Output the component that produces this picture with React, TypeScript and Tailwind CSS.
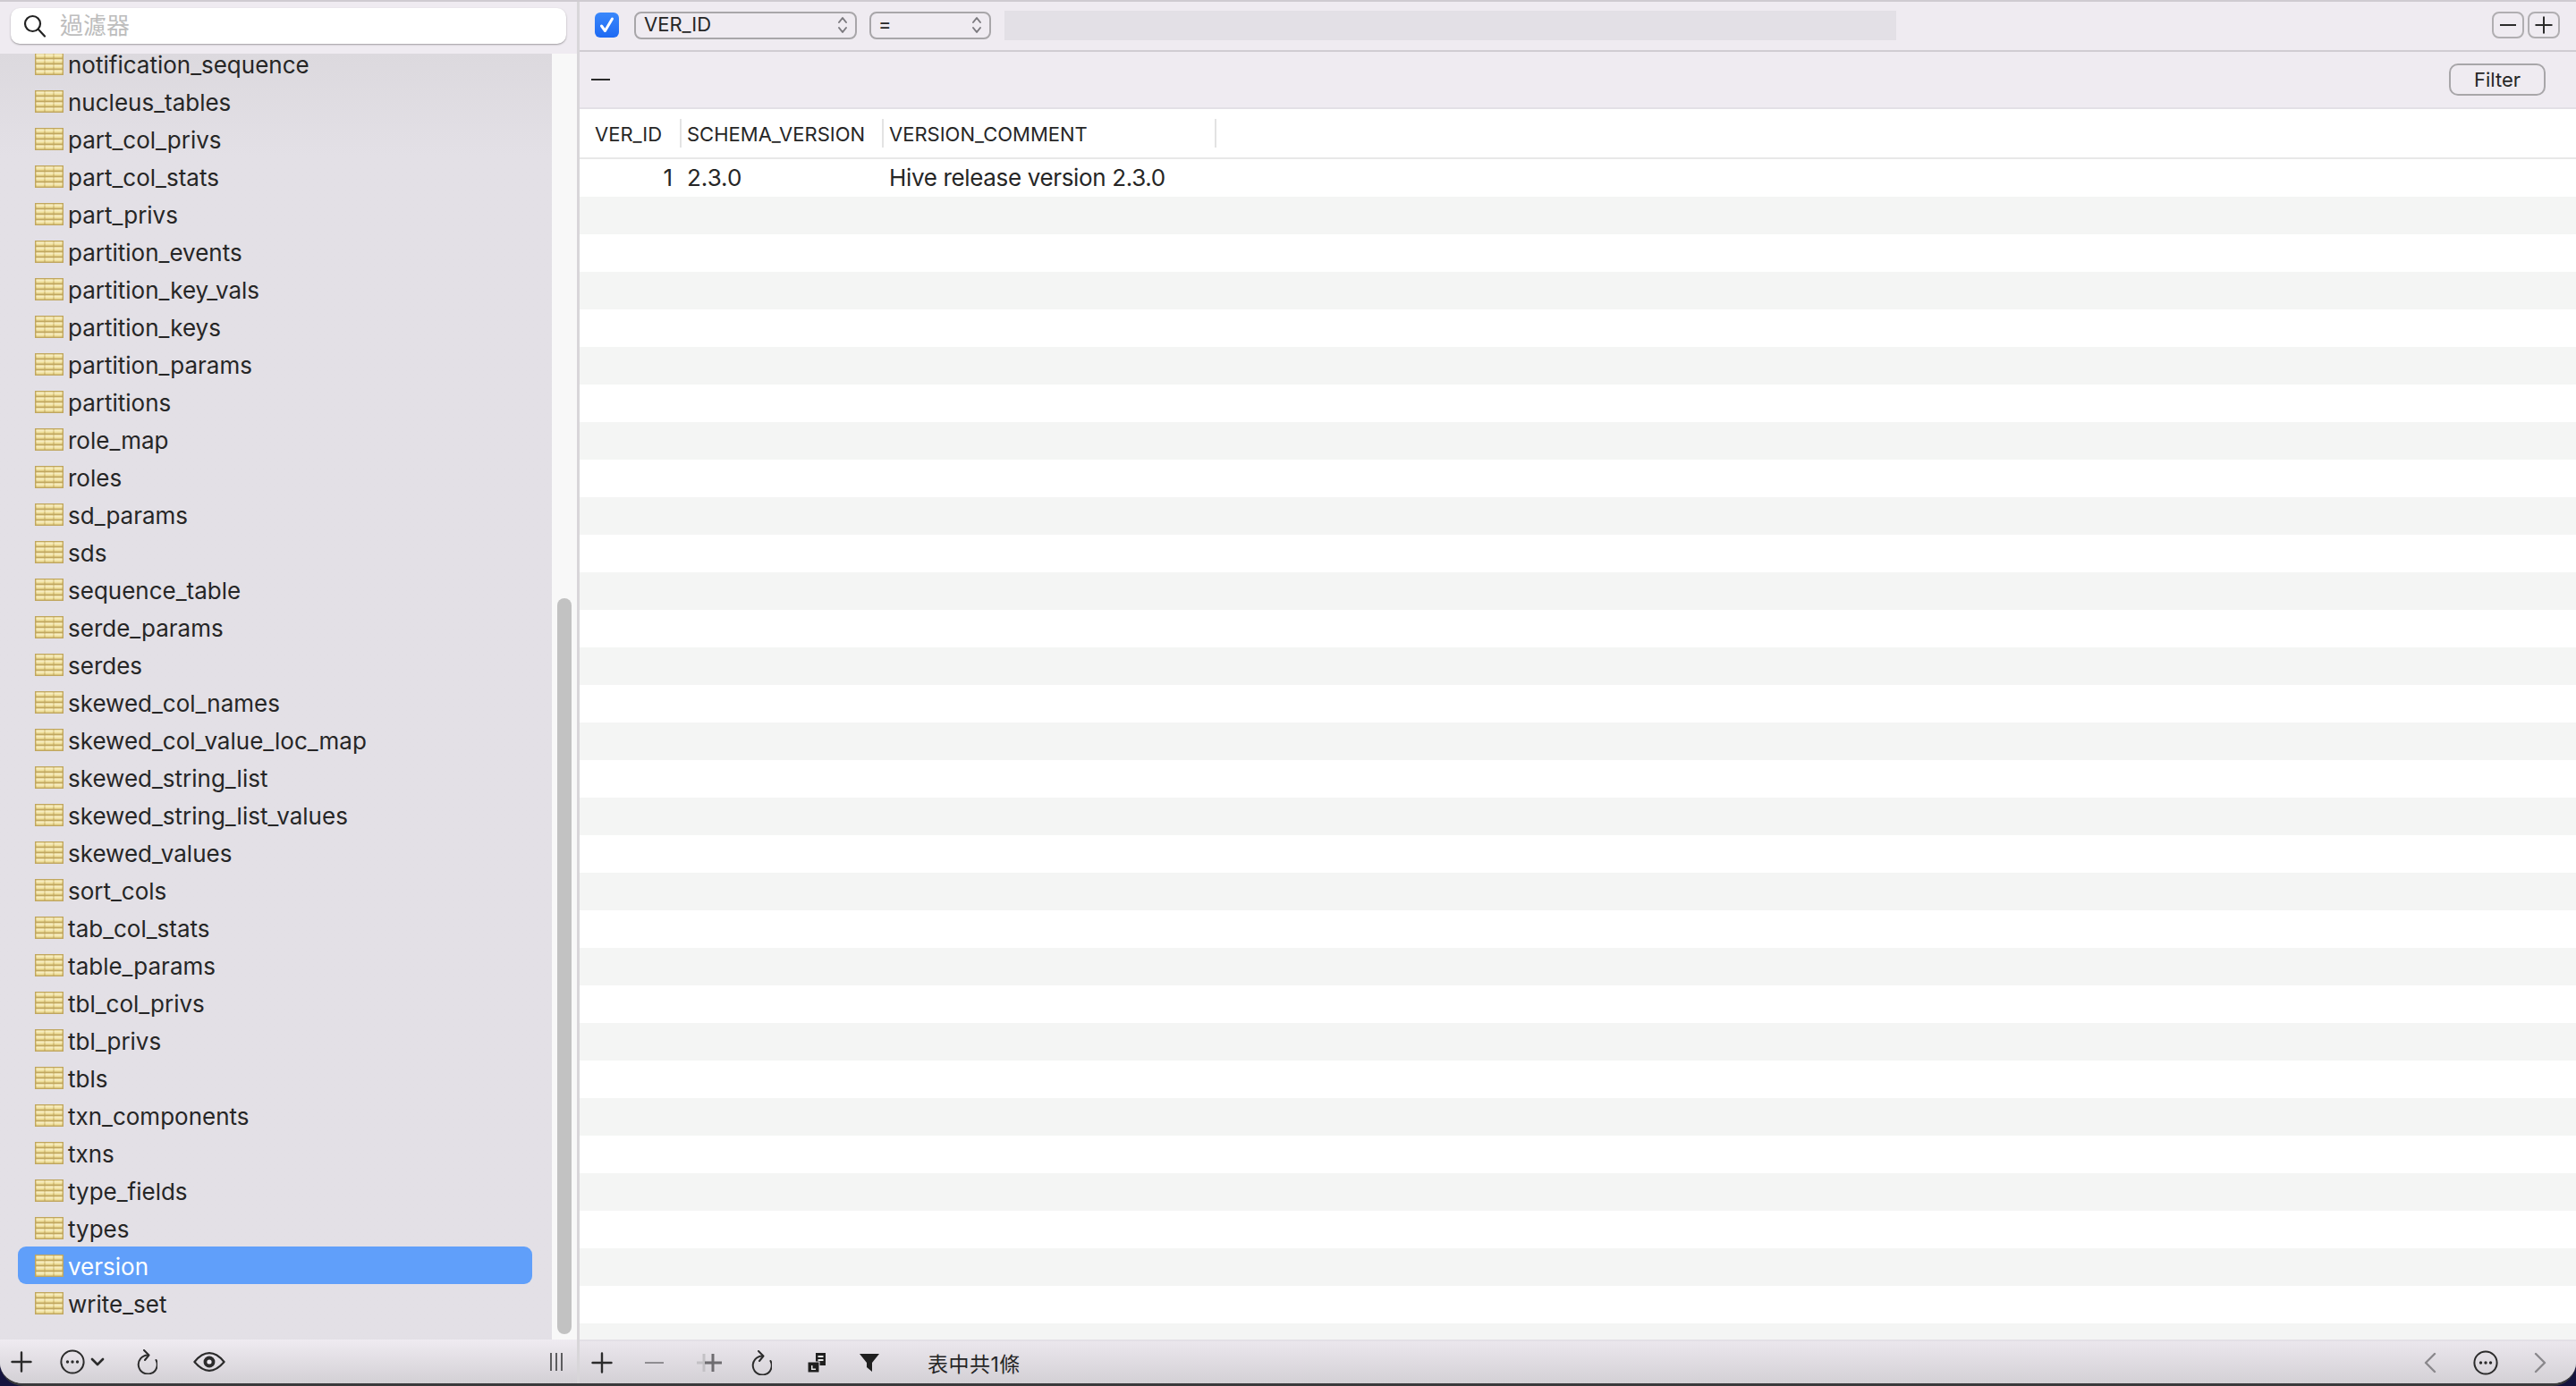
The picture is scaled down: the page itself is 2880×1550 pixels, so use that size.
const TABLES = ["notification_sequence","nucleus_tables","part_col_privs","part_col_stats","part_privs","partition_events","partition_key_vals","partition_keys","partition_params","partitions","role_map","roles","sd_params","sds","sequence_table","serde_params","serdes","skewed_col_names","skewed_col_value_loc_map","skewed_string_list","skewed_string_list_values","skewed_values","sort_cols","tab_col_stats","table_params","tbl_col_privs","tbl_privs","tbls","txn_components","txns","type_fields","types","version","write_set"];

function TableIcon() {
  return (
    <svg width="32" height="25" viewBox="0 0 32 25" className="shrink-0">
      <rect x="0" y="0" width="32" height="25" fill="#c0a65e" />
      {[1.5, 7.5, 13.5, 19.5].map((y) => (
        <g key={y}>
          {[1.5, 11.5, 21.5].map((x) => (
            <g key={x}>
              <rect x={x} y={y} width="9" height="4" fill="#efdf9b" />
              <rect x={x} y={y} width="9" height="2" fill="#f7edc1" />
            </g>
          ))}
        </g>
      ))}
    </svg>
  );
}

function Stepper() {
  return (
    <svg width="12" height="22" viewBox="0 0 12 22" fill="none" stroke="#7d7b80" strokeWidth="2" strokeLinecap="round" strokeLinejoin="round">
      <path d="M2 8 L6 3 L10 8" />
      <path d="M2 14 L6 19 L10 14" />
    </svg>
  );
}

function Plus({ size = 24, color = "#2b2b2b" }: { size?: number; color?: string }) {
  return (
    <svg width={size} height={size} viewBox="0 0 24 24" stroke={color} strokeWidth="2.4" strokeLinecap="round">
      <path d="M1.5 12 H22.5 M12 1.5 V22.5" />
    </svg>
  );
}

function Refresh() {
  return (
    <svg width="24" height="28" viewBox="0 0 24 28" fill="none" stroke="#2b2b2b" strokeWidth="2" strokeLinecap="round" strokeLinejoin="round">
      <path d="M13 6.5 A10.5 10.5 0 1 0 22.5 12" />
      <path d="M9 1 L14.5 6.5 L10 12" />
    </svg>
  );
}

function Ellipsis() {
  return (
    <svg width="28" height="28" viewBox="0 0 28 28" fill="none">
      <circle cx="14" cy="14" r="12.6" stroke="#2b2b2b" strokeWidth="2" />
      <circle cx="8.5" cy="14" r="1.7" fill="#2b2b2b" />
      <circle cx="14" cy="14" r="1.7" fill="#2b2b2b" />
      <circle cx="19.5" cy="14" r="1.7" fill="#2b2b2b" />
    </svg>
  );
}

export default function App() {
  const stripes = Array.from({ length: 32 }, (_, i) => i);
  return (
    <div className="h-[1550px] w-[2880px] overflow-hidden bg-[#15143f] font-['Inter','Noto_Sans_CJK_TC',sans-serif] text-[#262626]">
      <div className="flex h-full w-full overflow-hidden rounded-b-[26px] border-t-2 border-b-[3px] border-t-[#cfcbd1] border-b-[#3a3a3c] bg-[#efebf1]">
        {/* Sidebar */}
        <aside className="flex h-full w-[645px] shrink-0 flex-col">
          <div className="flex h-[58px] shrink-0 items-start px-[12px] pt-[7px]">
            <div className="flex h-[40px] w-[621px] items-center rounded-[10px] bg-white pl-[14px] shadow-[0_1px_2px_rgba(0,0,0,0.35)]">
              <svg width="26" height="26" viewBox="0 0 26 26" fill="none" stroke="#222" strokeWidth="2.2" strokeLinecap="round">
                <circle cx="10.5" cy="10.5" r="8.5" />
                <path d="M16.8 16.8 L24 24.5" />
              </svg>
              <span className="ml-[15px] text-[26px] leading-none text-[#bdbdbd]">過濾器</span>
            </div>
          </div>
          <div className="flex min-h-0 flex-1">
            <div className="min-w-0 flex-1 overflow-hidden bg-gradient-to-b from-[#dcd9de] via-[#e3e0e6] via-[8%] to-[#e3e0e6]">
              <ul className="-mt-[10px] pl-[20px] pr-[22px]">
                {TABLES.map((t) => (
                  <li
                    key={t}
                    className={`flex h-[42px] items-center rounded-[9px] pl-[19px] text-[26px] ${t === "version" ? "bg-[#609ffa] text-white" : ""}`}
                  >
                    <TableIcon />
                    <span className="ml-[5px] pt-[3px] leading-none">{t}</span>
                  </li>
                ))}
              </ul>
            </div>
            <div className="flex h-full w-[28px] shrink-0 flex-col items-center bg-[#f8f8f8] pt-[609px]">
              <div className="h-[823px] w-[16px] rounded-full bg-[#c2c2c2]" />
            </div>
          </div>
          <div className="flex h-[49px] shrink-0 items-center bg-gradient-to-b from-[#efebf1] to-[#d3d0d5]">
            <div className="ml-[12px]"><Plus /></div>
            <div className="ml-[31px]"><Ellipsis /></div>
            <svg width="16" height="10" viewBox="0 0 16 10" fill="none" stroke="#2b2b2b" strokeWidth="2.6" strokeLinecap="round" strokeLinejoin="round" className="ml-[6px]">
              <path d="M2 2 L8 8 L14 2" />
            </svg>
            <div className="ml-[35px]"><Refresh /></div>
            <svg width="36" height="22" viewBox="0 0 36 22" fill="none" className="ml-[40px]">
              <path d="M1.5 11 C8 3 13 1.2 18 1.2 C23 1.2 28 3 34.5 11 C28 19 23 20.8 18 20.8 C13 20.8 8 19 1.5 11 Z" stroke="#2b2b2b" strokeWidth="2.2" />
              <circle cx="18" cy="11" r="6.4" fill="#2b2b2b" />
              <circle cx="18" cy="11" r="2.6" fill="#efebf1" />
            </svg>
            <div className="ml-[363px] flex h-[20px] gap-[4px]">
              <div className="w-[2px] bg-[#5c5c5e]" />
              <div className="w-[2px] bg-[#5c5c5e]" />
              <div className="w-[2px] bg-[#5c5c5e]" />
            </div>
          </div>
        </aside>

        {/* Main */}
        <main className="flex h-full min-w-0 flex-1 flex-col border-l-[3px] border-[#d8d6d9]">
          <div className="flex h-[56px] shrink-0 items-center border-b-2 border-[#d0ccd2] pb-[2px] pl-[17px] pr-[18px]">
            <div className="flex h-[28px] w-[27px] items-center justify-center rounded-[6px] bg-gradient-to-b from-[#3a88fb] to-[#1e69f3]">
              <svg width="19" height="20" viewBox="0 0 19 20" fill="none" stroke="white" strokeWidth="3" strokeLinecap="round" strokeLinejoin="round">
                <path d="M3.5 11 L7.5 16.5 L15.5 3" />
              </svg>
            </div>
            <div className="ml-[17px] flex h-[31px] w-[249px] items-center justify-between rounded-[8px] border-2 border-[#a8a6a9] px-[8px]">
              <span className="pb-[3px] pl-[1px] text-[22px] leading-none">VER_ID</span>
              <Stepper />
            </div>
            <div className="ml-[14px] flex h-[31px] w-[136px] items-center justify-between rounded-[8px] border-2 border-[#a8a6a9] px-[8px]">
              <span className="pb-[3px] text-[22px] leading-none">=</span>
              <Stepper />
            </div>
            <div className="ml-[15px] h-[33px] w-[997px] bg-[#e3e0e6]" />
            <div className="ml-auto flex gap-[4px]">
              <div className="flex h-[30px] w-[36px] items-center justify-center rounded-[8px] border-2 border-[#b0aeb1]">
                <div className="h-[2px] w-[18px] bg-[#2b2b2b]" />
              </div>
              <div className="flex h-[30px] w-[36px] items-center justify-center rounded-[8px] border-2 border-[#b0aeb1]">
                <Plus size={20} />
              </div>
            </div>
          </div>
          <div className="flex h-[64px] shrink-0 items-center justify-between border-b-2 border-[#e3e0e6] pl-[13px] pr-[34px]">
            <div className="h-[2px] w-[21px] bg-[#2b2b2b]" />
            <button className="h-[36px] w-[108px] rounded-[10px] border-2 border-[#a8a6a9] text-[22px] leading-none">Filter</button>
          </div>
          <div className="flex h-[56px] shrink-0 items-center border-b-2 border-[#e8e8e8] bg-white text-[22px]">
            <div className="flex h-[32px] w-[114px] items-center border-r-2 border-[#e3e3e3] pl-[17px] pt-[2px]">VER_ID</div>
            <div className="flex h-[32px] w-[226px] items-center border-r-2 border-[#e3e3e3] pl-[6px] pt-[2px]">SCHEMA_VERSION</div>
            <div className="flex h-[32px] w-[372px] items-center border-r-2 border-[#e3e3e3] pl-[6px] pt-[2px]">VERSION_COMMENT</div>
          </div>
          <div className="min-h-0 flex-1 overflow-hidden bg-white">
            {stripes.map((i) => (
              <div key={i} className={`flex h-[42px] items-center text-[26px] ${i % 2 ? "bg-[#f4f5f4]" : "bg-white"}`}>
                {i === 0 && (
                  <>
                    <div className="w-[104px] text-right leading-none">1</div>
                    <div className="ml-[16px] w-[226px] leading-none">2.3.0</div>
                    <div className="leading-none tracking-[-0.35px]">Hive release version 2.3.0</div>
                  </>
                )}
              </div>
            ))}
          </div>
          <div className="flex h-[49px] shrink-0 items-center border-t-2 border-[#e3e0e6] bg-gradient-to-b from-[#ebe7ed] to-[#d3d0d5]">
            <div className="ml-[13px]"><Plus /></div>
            <div className="ml-[36px] h-[2px] w-[21px] bg-[#8f8d91]" />
            <svg width="30" height="22" viewBox="0 0 30 22" className="ml-[36px]" strokeWidth="3">
              <path d="M1 11 H20 M9 1 V21" stroke="#c3c1c5" />
              <path d="M10 11 H29 M19 1 V21" stroke="#6e6c70" />
            </svg>
            <div className="ml-[31px]"><Refresh /></div>
            <svg width="20" height="22" viewBox="0 0 20 22" className="ml-[40px]">
              <rect x="9" y="0" width="11" height="14" fill="#1f1f1f" />
              <rect x="11.5" y="3" width="6" height="2" fill="#e8e8e8" />
              <rect x="11.5" y="7" width="6" height="2" fill="#e8e8e8" />
              <rect x="0" y="10" width="13" height="12" fill="#1f1f1f" stroke="#e5e2e7" strokeWidth="1" />
              <rect x="4" y="14" width="1.5" height="5" fill="#e8e8e8" />
              <rect x="4" y="17.5" width="5" height="1.5" fill="#e8e8e8" />
            </svg>
            <svg width="22" height="20" viewBox="0 0 22 20" className="ml-[38px]">
              <path d="M0 0 H22 L14 10 V20 L8 15 V10 Z" fill="#1f1f1f" />
            </svg>
            <span className="ml-[54px] pt-[5px] text-[23px] leading-none tracking-[0.5px]">表中共1條</span>
            <svg width="14" height="24" viewBox="0 0 14 24" fill="none" stroke="#8a888c" strokeWidth="2.4" strokeLinecap="round" strokeLinejoin="round" className="ml-auto">
              <path d="M12 2 L2 12 L12 22" />
            </svg>
            <div className="ml-[41px]"><Ellipsis /></div>
            <svg width="14" height="24" viewBox="0 0 14 24" fill="none" stroke="#8a888c" strokeWidth="2.4" strokeLinecap="round" strokeLinejoin="round" className="ml-[40px] mr-[33px]">
              <path d="M2 2 L12 12 L2 22" />
            </svg>
          </div>
        </main>
      </div>
    </div>
  );
}
